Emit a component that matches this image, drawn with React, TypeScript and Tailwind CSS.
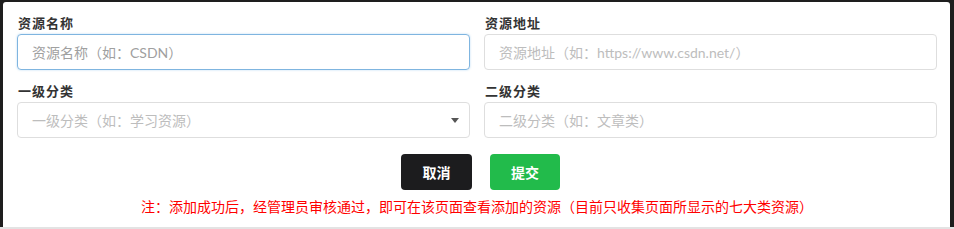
const font = "font-['Lato','Noto_Sans_CJK_SC',sans-serif]";

interface FieldProps {
  label: string;
  placeholder: string;
  focused?: boolean;
  select?: boolean;
  dim?: boolean;
}

const Field: React.FC<FieldProps> = ({ label, placeholder, focused, select, dim }) => {
  return (
    <div className="flex flex-col">
      <label className="mb-[2px] h-[18px] pl-px text-[13px] leading-[18px] font-bold tracking-[1px] text-[#333]">{label}</label>
      <div
        className={
          'relative flex h-[36px] items-center rounded-[4px] border pl-[14px] text-[14px] ' +
          (focused ? 'border-[#7fb5e0] shadow-[0_0_2px_rgba(102,175,233,0.5)]' : 'border-[#dedede]')
        }
      >
        <span className={dim ? 'text-[#bdbdbd]' : 'text-[#a0a0a0]'}>{placeholder}</span>
        {select && (
          <svg className="absolute right-[10px] top-[15px]" width="8" height="5" viewBox="0 0 8 5">
            <path d="M0 0h8L4 5z" fill="#555" />
          </svg>
        )}
      </div>
    </div>
  );
};

export default function App() {
  return (
    <div className={'h-[229px] w-[954px] overflow-hidden bg-[#1e1e1e] ' + font}>
      <div className="ml-[3px] mt-[2px] flex h-[225px] w-[947px] flex-col rounded-t-[3px] bg-white pl-[14px] pr-[13px] pt-[12px]">
        {/* form fields */}
        <div className="grid grid-cols-2 gap-x-[14px] gap-y-[12px]">
          <Field label="资源名称" placeholder="资源名称（如：CSDN）" focused />
          <Field label="资源地址" placeholder="资源地址（如：https://www.csdn.net/）" dim />
          <Field label="一级分类" placeholder="一级分类（如：学习资源）" select dim />
          <Field label="二级分类" placeholder="二级分类（如：文章类）" dim />
        </div>

        {/* actions */}
        <div className="mt-[16px] flex justify-center gap-[18px] pl-[7px]">
          <button className="h-[36px] w-[71px] rounded-[4px] bg-[#1c1c1e] text-[14px] font-bold text-white">取消</button>
          <button className="h-[36px] w-[70px] rounded-[4px] bg-[#22bb4b] text-[14px] font-bold text-white">提交</button>
        </div>

        <p className="mt-[7px] text-center text-[14px] leading-[20px] text-[#ff0000]">
          注：添加成功后，经管理员审核通过，即可在该页面查看添加的资源（目前只收集页面所显示的七大类资源）
        </p>
      </div>
      <div className="h-[2px] w-full bg-[#e3e3e3]" />
    </div>
  );
}
